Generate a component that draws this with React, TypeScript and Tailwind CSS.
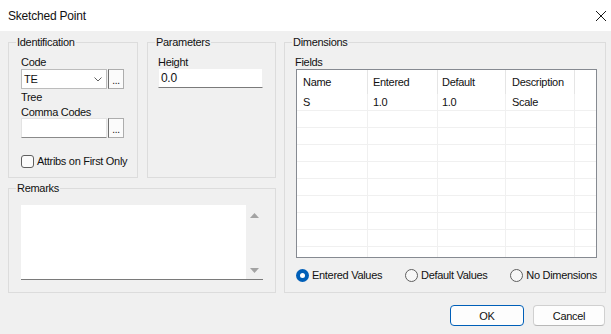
import React from "react";

const headers = ["Name", "Entered", "Default", "Description", ""];
const colW = ["w-[71px]", "w-[70px]", "w-[68px]", "w-[69px]", "w-[21px]"];
const padL = ["pl-[6px]", "pl-[5px]", "pl-[4px]", "pl-[6px]", "pl-[4px]"];
const rows = [["S", "1.0", "1.0", "Scale", ""], ...Array.from({ length: 9 }, () => ["", "", "", "", ""])];

function Group({ title, className, children }: { title: string; className: string; children: React.ReactNode }) {
  return (
    <fieldset className={`border border-[#dcdcdc] m-0 p-0 min-w-0 ${className}`}>
      <legend className="ml-[7px] px-[1px] leading-[14px]">{title}</legend>
      {children}
    </fieldset>
  );
}

function DotsButton() {
  return (
    <div className="w-[16px] h-[20px] border border-[#adadad] border-l-[#6f6f6f] bg-[#fbfbfb] flex items-end justify-center leading-[12px] pb-[1px] text-[10px]">
      ...
    </div>
  );
}

function Radio({ label, checked }: { label: string; checked?: boolean }) {
  return (
    <div className="flex items-center gap-[3px] h-[14px]">
      {checked ? (
        <span className="w-[13px] h-[13px] rounded-full bg-[#005fb8] flex items-center justify-center">
          <span className="w-[5px] h-[5px] rounded-full bg-white" />
        </span>
      ) : (
        <span className="w-[13px] h-[13px] rounded-full border border-[#5f5f5f] bg-[#f7f7f7]" />
      )}
      <span className="leading-[14px]">{label}</span>
    </div>
  );
}

export default function App() {
  return (
    <div className="w-[611px] h-[334px] bg-[#f0f0f0] flex flex-col overflow-hidden text-[11px] tracking-[-0.3px] text-[#111] font-['Liberation_Sans',Arial,sans-serif]">
      <div className="h-[31px] shrink-0 bg-white flex items-center justify-between pl-[8px] pr-[3px]">
        <span className="text-[12px] tracking-[-0.2px]">Sketched Point</span>
        <svg width="12" height="12" viewBox="0 0 12 12" className="mr-[1px]">
          <path d="M1 1L11 11M11 1L1 11" stroke="#1a1a1a" strokeWidth="1" />
        </svg>
      </div>

      <div className="flex pl-[8px] pt-[4px] gap-[8px]">
        <div className="w-[268px] flex flex-col">
          <div className="flex gap-[9px]">
            <Group title="Identification" className="w-[130px] h-[143px]">
              <div className="pl-[12px] pt-[7px] flex flex-col">
                <div className="leading-[12px] h-[12px]">Code</div>
                <div className="flex gap-[1px] mt-[1px]">
                  <div className="w-[86px] h-[20px] bg-white border border-[#bcbcbc] flex items-center justify-between pl-[2px] pr-[4px]">
                    <span>TE</span>
                    <svg width="8" height="5" viewBox="0 0 8 5">
                      <path d="M0.5 0.5L4 4L7.5 0.5" stroke="#606060" fill="none" strokeWidth="1" />
                    </svg>
                  </div>
                  <DotsButton />
                </div>
                <div className="leading-[12px] h-[12px] mt-[2px]">Tree</div>
                <div className="leading-[12px] h-[12px] mt-[3px]">Comma Codes</div>
                <div className="flex gap-[1px]">
                  <div className="w-[86px] h-[20px] bg-white border border-[#e3e3e3] border-b-[#8a8a8a]" />
                  <DotsButton />
                </div>
                <div className="flex items-center gap-[3px] mt-[17px] h-[13px]">
                  <span className="w-[13px] h-[13px] rounded-[3px] border border-[#5f5f5f] bg-[#fbfbfb]" />
                  <span className="leading-[13px]">Attribs on First Only</span>
                </div>
              </div>
            </Group>
            <Group title="Parameters" className="w-[129px] h-[143px]">
              <div className="pl-[10px] pt-[7px] flex flex-col">
                <div className="leading-[12px] h-[12px]">Height</div>
                <div className="w-[105px] h-[20px] bg-white border border-[#f0f0f0] border-b-[#7a7a7a] flex items-center pl-[2px] text-[12px]">
                  0.0
                </div>
              </div>
            </Group>
          </div>
          <Group title="Remarks" className="w-[268px] h-[112px] mt-[3px]">
            <div className="pl-[12px] pt-[10px]">
              <div className="w-[242px] h-[75px] bg-white border-b border-[#7a7a7a] flex justify-end">
                <div className="w-[17px] h-full bg-[#f0f0f0] flex flex-col items-center justify-between pt-[8px] pb-[6px]">
                  <svg width="9" height="5" viewBox="0 0 9 5">
                    <path d="M0 5L4.5 0L9 5Z" fill="#a3a3a3" />
                  </svg>
                  <svg width="9" height="5" viewBox="0 0 9 5">
                    <path d="M0 0L4.5 5L9 0Z" fill="#a3a3a3" />
                  </svg>
                </div>
              </div>
            </div>
          </Group>
        </div>

        <Group title="Dimensions" className="w-[322px] h-[258px]">
          <div className="pl-[10px] pt-[7px] flex flex-col">
            <div className="leading-[12px] h-[12px]">Fields</div>
            <div className="ml-[1px] mt-[1px] w-[301px] h-[189px] bg-white border border-[#868a91] overflow-hidden">
              <div className="flex h-[24px]">
                {headers.map((h, i) => (
                  <div key={i} className={`${colW[i]} ${padL[i]} h-full flex items-center border-r border-[#e5e5e5] ${i === 4 ? "border-r-0" : ""}`}>
                    {h}
                  </div>
                ))}
              </div>
              {rows.map((r, ri) => (
                <div key={ri} className="flex h-[17px] border-b border-[#f0f0f0]">
                  {r.map((c, ci) => (
                    <div key={ci} className={`${colW[ci]} ${padL[ci]} h-full flex items-center border-r border-[#f0f0f0] ${ci === 4 ? "border-r-0" : ""}`}>
                      {c}
                    </div>
                  ))}
                </div>
              ))}
            </div>
            <div className="ml-[1px] w-[301px] mt-[10px] flex justify-between">
              <Radio label="Entered Values" checked />
              <Radio label="Default Values" />
              <Radio label="No Dimensions" />
            </div>
          </div>
        </Group>
      </div>

      <div className="flex justify-end gap-[9px] pr-[6px] mt-[12px]">
        <button className="w-[74px] h-[21px] rounded-[4px] border border-[#005fb8] bg-[#fdfdfd] flex items-center justify-center leading-[12px]">
          OK
        </button>
        <button className="w-[72px] h-[21px] rounded-[4px] border border-[#d0d0d0] border-b-[#b8b8b8] bg-[#fdfdfd] flex items-center justify-center leading-[12px]">
          Cancel
        </button>
      </div>
    </div>
  );
}
